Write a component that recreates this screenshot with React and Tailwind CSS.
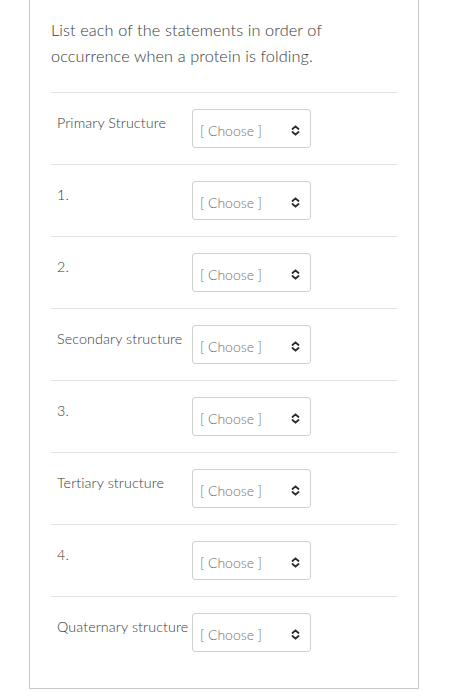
import React from "react";

const rows = [
  "Primary Structure",
  "1.",
  "2.",
  "Secondary structure",
  "3.",
  "Tertiary structure",
  "4.",
  "Quaternary structure",
];

function UpDown() {
  return (
    <svg width="9" height="11" viewBox="0 0 9 11" fill="none" stroke="#2a2a2a" strokeWidth="1.8" strokeLinecap="round" strokeLinejoin="round">
      <path d="M1.5 4 L4.5 1.3 L7.5 4" />
      <path d="M1.5 7 L4.5 9.7 L7.5 7" />
    </svg>
  );
}

export default function App() {
  return (
    <div className="w-[449px] h-[700px] bg-white" style={{ fontFamily: "Lato, 'Noto Sans', sans-serif" }}>
      <div className="ml-[29px] w-[390px] h-[689px] border-x-[1.5px] border-b-[1.5px] border-[#c8c8c8] pt-[17px] px-[21px]">
        <p className="text-[16.3px] leading-[26px] text-[#3a3a3a] font-light tracking-[0.1px] w-[310px]">
          List each of the statements in order of occurrence when a protein is folding.
        </p>
        <div className="mt-[23px] w-[347px]">
          {rows.map((r) => (
            <div key={r} className="border-t border-[#e2e2e2] flex items-start pt-[16px] pb-[16px] h-[72px]">
              <div className="w-[141px] pl-[6px] pt-[4px] text-[14.3px] leading-[20px] text-[#3a3a3a] font-light whitespace-nowrap tracking-[0.1px]">
                {r}
              </div>
              <div className="w-[119px] h-[39px] border border-[#d0d0d0] rounded-[3px] flex items-center justify-between pl-[7px] pr-[10px] pt-[4px] bg-white">
                <span className="text-[14px] leading-[20px] text-[#6e6e6e] font-light">[ Choose ]</span>
                <UpDown />
              </div>
            </div>
          ))}
        </div>
      </div>
    </div>
  );
}
